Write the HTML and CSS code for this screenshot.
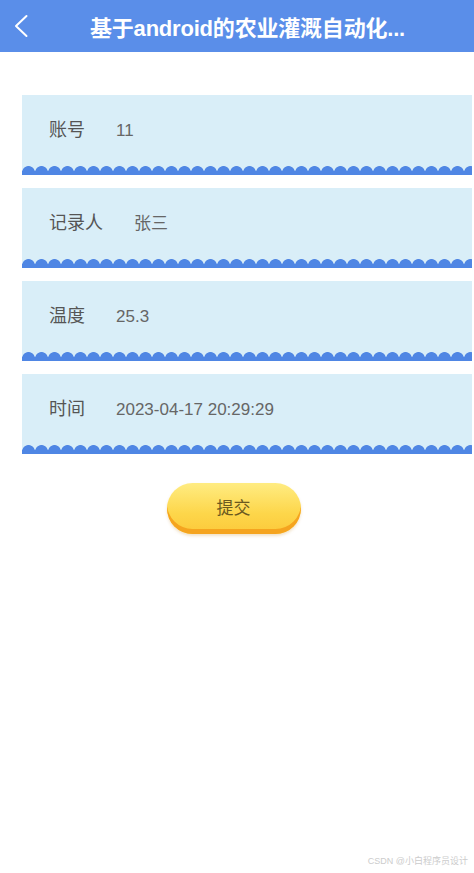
FILE: index.html
```html
<!DOCTYPE html>
<html lang="zh">
<head>
<meta charset="utf-8">
<title>记录</title>
<link rel="stylesheet" href="styles.css">
</head>
<body>
<header class="topbar">
  <svg class="back" width="16" height="24" viewBox="0 0 16 24"><path d="M13.5 2 L3 12 L13.5 22" fill="none" stroke="#ffffff" stroke-width="2" stroke-linecap="round" stroke-linejoin="round"/></svg>
  <h1 class="title">基于android的农业灌溉自动化...</h1>
</header>
<main class="list">
  <div class="card"><div class="row"><p class="line"><span class="label">账号</span><span class="value">11</span></p></div><div class="wave"></div></div>
  <div class="card"><div class="row"><p class="line"><span class="label">记录人</span><span class="value">张三</span></p></div><div class="wave"></div></div>
  <div class="card"><div class="row"><p class="line"><span class="label">温度</span><span class="value">25.3</span></p></div><div class="wave"></div></div>
  <div class="card"><div class="row"><p class="line"><span class="label">时间</span><span class="value">2023-04-17 20:29:29</span></p></div><div class="wave"></div></div>
  <div class="actions"><button class="submit">提交</button></div>
</main>
<div class="mark">CSDN @小白程序员设计</div>
</body>
</html>
```
FILE: styles.css
```css
html, body { margin: 0; padding: 0; background: #ffffff; }
body {
  width: 474px; height: 873px; position: relative; overflow: hidden;
  font-family: "Liberation Sans", "Noto Sans CJK SC", sans-serif;
}
.topbar {
  height: 52px; background: #5a8ee9;
  display: flex; align-items: center;
}
.back { margin-left: 13px; margin-top: 0; }
.title {
  margin: 0 0 0 61px; color: #ffffff; font-size: 22px; font-weight: bold;
  white-space: nowrap; letter-spacing: -0.2px;
}
.list {
  display: flex; flex-direction: column; gap: 13px;
  padding: 43px 2px 0 22px;
}
.card { background: #d9eef8; height: 80px; display: flex; flex-direction: column; }
.row {
  flex: 1; display: flex; align-items: center; padding: 0 0 0 27px;
}
.line { margin: 0; line-height: 24px; }
.label { font-size: 18px; margin-right: 31px; color: #555; }
.value { font-size: 17px; color: #666; }
.wave {
  height: 10px;
  background:
    linear-gradient(#4f86e4, #4f86e4) left bottom / 100% 4px no-repeat,
    radial-gradient(circle at 6.5px 7.5px, #4f86e4 6px, rgba(79,134,228,0) 6.8px) left top / 13px 10px repeat-x;
}
.actions { display: flex; justify-content: center; padding-top: 16px; padding-right: 27px; }
.submit {
  width: 134px; height: 51px; border: none; border-radius: 26px;
  background: linear-gradient(#ffec82, #fdd64a 60%, #fcc93a);
  box-shadow: inset 0 -5px 0 #f5a41f, 0 2px 3px rgba(200,140,40,0.25);
  font-family: "Noto Sans CJK SC", sans-serif; font-size: 17px; color: #6b5a20;
  padding: 0 0 4px 0;
}
.mark {
  position: absolute; right: 6px; bottom: 6px;
  font-size: 9px; color: #cccccc;
}
```
